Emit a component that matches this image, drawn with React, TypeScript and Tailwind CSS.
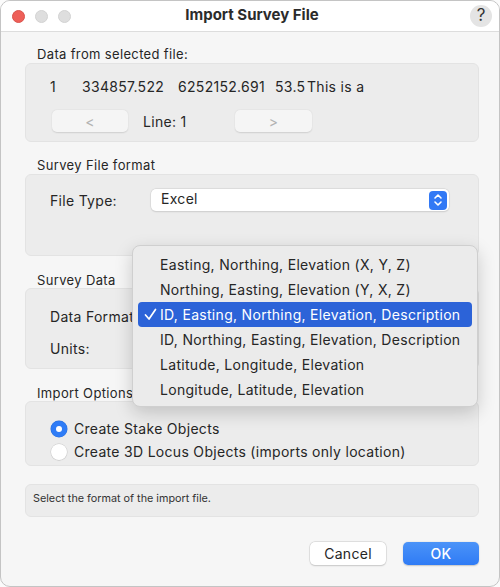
import React from "react";

const font = { fontFamily: "Inter, 'Noto Sans', 'Liberation Sans', sans-serif" };

function Label({ children }: { children: React.ReactNode }) {
  return <div className="h-[16px] leading-[16px] text-[13px] tracking-[0.35px] pl-[12px] text-[#262626]">{children}</div>;
}

function Group({ className = "", children }: { className?: string; children?: React.ReactNode }) {
  return (
    <div className={"relative rounded-[6px] bg-[#ececec] border border-[#e3e3e3] " + className}>{children}</div>
  );
}

function Radio({ checked }: { checked: boolean }) {
  return checked ? (
    <div className="w-[16px] h-[16px] rounded-full bg-[#2f7cf6] flex items-center justify-center shadow-[0_0_0_0.5px_#2a6fd9]">
      <div className="w-[6px] h-[6px] rounded-full bg-white" />
    </div>
  ) : (
    <div className="w-[16px] h-[16px] rounded-full bg-white shadow-[0_0_0_0.5px_#c9c9c9,0_0.5px_1px_rgba(0,0,0,0.15)]" />
  );
}

const items = [
  "Easting, Northing, Elevation (X, Y, Z)",
  "Northing, Easting, Elevation (Y, X, Z)",
  "ID, Easting, Northing, Elevation, Description",
  "ID, Northing, Easting, Elevation, Description",
  "Latitude, Longitude, Elevation",
  "Longitude, Latitude, Elevation",
];

export default function App() {
  return (
    <div className="w-[500px] h-[587px] bg-[#fbfbfb] relative overflow-hidden" style={font}>
      <div className="w-[500px] h-[587px] rounded-[10px] border border-[#c4c4c4] bg-[#f6f6f6] overflow-hidden flex flex-col text-[#262626]">
        {/* Title bar */}
        <div className="h-[31px] shrink-0 bg-white border-b border-[#dddddd] relative flex items-center">
          <div className="flex items-center gap-[10px] pl-[11px]">
            <div className="w-[13px] h-[13px] rounded-full bg-[#ee5f58] border border-[#d9534c]" />
            <div className="w-[13px] h-[13px] rounded-full bg-[#dedede] border border-[#d2d2d2]" />
            <div className="w-[13px] h-[13px] rounded-full bg-[#dedede] border border-[#d2d2d2]" />
          </div>
          <div className="absolute left-0 right-0 top-0 h-[29px] flex items-center justify-center text-[15px] font-bold text-[#2b2b2b] pl-[4px]">
            Import Survey File
          </div>
          <div className="absolute right-[7px] top-[4px] w-[22px] h-[22px] rounded-full bg-[#e4e4e4] flex items-center justify-center text-[17px] text-[#333]">
            ?
          </div>
        </div>

        {/* Content */}
        <div className="pl-[24px] pr-[20px] flex flex-col tracking-[0.3px]">
          <div className="mt-[14px]">
            <Label>Data from selected file:</Label>
          </div>
          <Group className="h-[79px] mt-[1px]">
            <div className="flex items-center h-[16px] mt-[15px] pl-[24px] text-[14px] leading-[16px]">
              <span className="w-[32px]">1</span>
              <span className="w-[96px]">334857.522</span>
              <span className="w-[97px]">6252152.691</span>
              <span className="w-[32px]">53.5</span>
              <span>This is a</span>
            </div>
            <div className="flex items-center mt-[15px] pl-[26px]">
              <div className="w-[76px] h-[22px] rounded-[5px] bg-[#f5f5f5] shadow-[0_0.5px_1.5px_rgba(0,0,0,0.12)] flex items-center justify-center text-[14px] text-[#b3b3b3]">
                &lt;
              </div>
              <span className="ml-[15px] w-[92px] text-[14px]">Line: 1</span>
              <div className="w-[77px] h-[22px] rounded-[5px] bg-[#f5f5f5] shadow-[0_0.5px_1.5px_rgba(0,0,0,0.12)] flex items-center justify-center text-[14px] text-[#b3b3b3]">
                &gt;
              </div>
            </div>
          </Group>

          <div className="mt-[15px]">
            <Label>Survey File format</Label>
          </div>
          <Group className="h-[82px] mt-[1px]">
            <div className="flex items-center mt-[14px] pl-[24px]">
              <span className="w-[101px] text-[14px]">File Type:</span>
              <div className="w-[298px] h-[22px] rounded-[5px] bg-white shadow-[0_0_0_0.5px_#d4d4d4,0_0.5px_1.5px_rgba(0,0,0,0.15)] flex items-center justify-between pl-[10px] pr-[2px]">
                <span className="text-[14px] leading-[16px] -mt-[2px]">Excel</span>
                <div className="w-[18px] h-[19px] rounded-[4px] bg-[#3279f5] flex items-center justify-center">
                  <svg width="10" height="14" viewBox="0 0 10 14" fill="none" stroke="white" strokeWidth="1.6" strokeLinecap="round" strokeLinejoin="round">
                    <path d="M2 5 L5 2 L8 5" />
                    <path d="M2 9 L5 12 L8 9" />
                  </svg>
                </div>
              </div>
            </div>
          </Group>

          <div className="mt-[16px]">
            <Label>Survey Data</Label>
          </div>
          <Group className="h-[81px]">
            <div className="mt-[20px] pl-[24px] text-[14px] leading-[16px]">Data Format:</div>
            <div className="mt-[16px] pl-[24px] text-[14px] leading-[16px]">Units:</div>
          </Group>

          <div className="mt-[16px]">
            <Label>Import Options</Label>
          </div>
          <Group className="h-[65px]">
            <div className="flex items-center gap-[7px] mt-[19px] pl-[25px] text-[14px] leading-[16px]">
              <Radio checked />
              <span>Create Stake Objects</span>
            </div>
            <div className="flex items-center gap-[7px] mt-[7px] pl-[25px] text-[14px] leading-[16px]">
              <Radio checked={false} />
              <span>Create 3D Locus Objects (imports only location)</span>
            </div>
          </Group>

          <Group className="h-[33px] mt-[18px]">
            <div className="pl-[7px] mt-[7px] text-[10.8px] tracking-[0px] leading-[14px] text-[#333]">Select the format of the import file.</div>
          </Group>

          <div className="flex justify-end gap-[17px] mt-[25px]">
            <div className="w-[76px] h-[23px] rounded-[5px] bg-white shadow-[0_0_0_0.5px_#d0d0d0,0_0.5px_1.5px_rgba(0,0,0,0.2)] flex items-center justify-center text-[14px]">
              Cancel
            </div>
            <div className="w-[76px] h-[23px] rounded-[5px] bg-gradient-to-b from-[#4b93f8] to-[#2f7bf5] shadow-[0_0.5px_1.5px_rgba(0,0,0,0.2)] flex items-center justify-center text-[14px] font-medium text-white">
              OK
            </div>
          </div>
        </div>
      </div>

      {/* Popup menu */}
      <div className="absolute left-[132px] top-[245px] w-[346px] h-[162px] rounded-[8px] bg-[#ebebeb] border border-[#cfcfcf] shadow-[0_6px_18px_rgba(0,0,0,0.18)] pt-[6px] px-[5px] text-[14px] tracking-[0.3px] text-[#262626]">
        {items.map((t, i) => (
          <div
            key={i}
            className={
              "h-[25px] rounded-[4px] flex items-center relative pl-[22px] " +
              (i === 2 ? "bg-[#2c63d8] text-white" : "")
            }
          >
            {i === 2 && (
              <svg className="absolute left-[6px] top-[6px]" width="13" height="13" viewBox="0 0 13 13" fill="none" stroke="white" strokeWidth="1.7" strokeLinecap="round" strokeLinejoin="round">
                <path d="M1.5 7 L5 11 L11.5 1.5" />
              </svg>
            )}
            <span className="leading-[16px]">{t}</span>
          </div>
        ))}
      </div>
    </div>
  );
}
